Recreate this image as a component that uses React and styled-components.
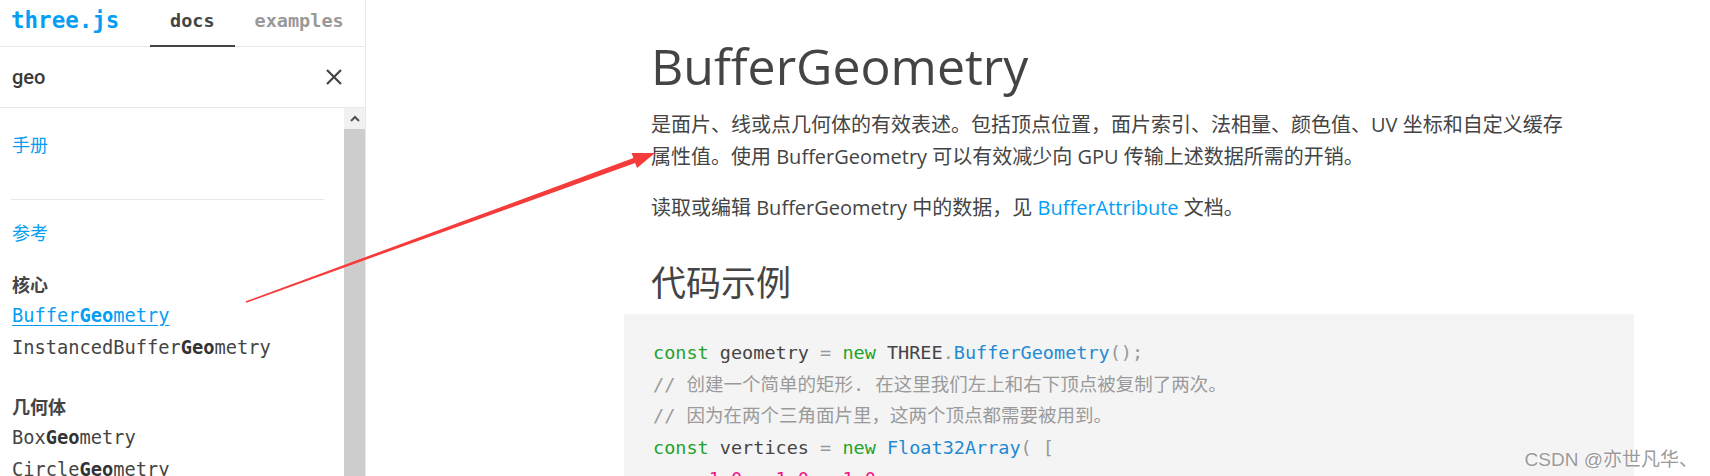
import React from "react";
import styled, { createGlobalStyle } from "styled-components";

const Colors = {
  text: "#444",
  link: "#049EF4",
  line: "#e8e8e8",
  muted: "#999",
};

const mono = `"DejaVu Sans Mono", "Liberation Mono", "Noto Sans CJK SC", monospace`;
const sans = `"Open Sans", "Noto Sans CJK SC", sans-serif`;

const GlobalStyle = createGlobalStyle`
  html, body {
    margin: 0;
    padding: 0;
    background: #fff;
    overflow: hidden;
  }
  #root {
    height: 476px;
  }
`;

const Page = styled.div`
  position: relative;
  display: flex;
  height: 476px;
  overflow: hidden;
  color: ${Colors.text};
`;

const Sidebar = styled.nav`
  flex: 0 0 366px;
  box-sizing: border-box;
  border-right: 1px solid ${Colors.line};
  display: flex;
  flex-direction: column;
`;

const Header = styled.div`
  display: flex;
  height: 46px;
  border-bottom: 1px solid ${Colors.line};
`;

const Logo = styled.div`
  flex: 0 0 150px;
  box-sizing: border-box;
  padding: 0 0 6px 11px;
  display: flex;
  align-items: center;
  font-family: ${mono};
  font-weight: bold;
  font-size: 22.5px;
  color: ${Colors.link};
`;

const Tab = styled.div`
  display: flex;
  align-items: center;
  padding: 0 20px 5px 20px;
  font-family: ${mono};
  font-weight: bold;
  font-size: 18.5px;
  color: ${props => (props.active ? Colors.text : Colors.muted)};
  border-bottom: 2px solid ${props => (props.active ? Colors.text : "transparent")};
  margin-bottom: -1px;
`;

const SearchRow = styled.div`
  height: 60px;
  border-bottom: 1px solid ${Colors.line};
  display: flex;
  align-items: center;
  justify-content: space-between;
  padding: 0 22px 0 12px;
  font-family: Roboto, sans-serif;
  font-weight: 500;
  font-size: 20px;
  color: #3a3a3a;
`;

const Panel = styled.div`
  flex: 1;
  display: flex;
  overflow: hidden;
`;

const NavList = styled.div`
  flex: 1;
  padding-top: 20px;
`;

const NavLink = styled.div`
  padding-left: 12px;
  line-height: 32px;
  font-family: "Noto Sans CJK SC", sans-serif;
  font-size: 18px;
  color: ${Colors.link};
  margin-bottom: ${props => props.gap || 0}px;
`;

const Divider = styled.hr`
  border: none;
  border-top: 1px solid ${Colors.line};
  margin: 0 20px 16px 11px;
`;

const Section = styled.div`
  margin-bottom: ${props => props.gap || 0}px;
`;

const SectionTitle = styled.div`
  padding-left: 12px;
  line-height: 32px;
  font-family: "Noto Sans CJK SC", sans-serif;
  font-weight: bold;
  font-size: 18px;
  color: ${Colors.text};
`;

const Entry = styled.div`
  padding-left: 12px;
  line-height: 32px;
  font-family: ${mono};
  font-size: 18.7px;
  white-space: nowrap;
  color: ${props => (props.selected ? Colors.link : Colors.text)};
  text-decoration: ${props => (props.selected ? "underline" : "none")};
  text-underline-offset: 3px;
  b {
    color: ${props => (props.selected ? Colors.link : "#333")};
  }
`;

const Scrollbar = styled.div`
  flex: 0 0 21px;
  display: flex;
  flex-direction: column;
  background: #f1f1f1;
`;

const ScrollButton = styled.div`
  height: 21px;
  display: flex;
  align-items: center;
  justify-content: center;
`;

const ScrollThumb = styled.div`
  flex: 1;
  background: #cdcdcd;
`;

const Main = styled.main`
  flex: 1;
  padding-left: 285px;
  font-family: ${sans};
`;

const Title = styled.h1`
  margin: 36px 0 0;
  font-family: ${sans};
  font-weight: normal;
  font-size: 50px;
  line-height: 60px;
  color: ${Colors.text};
`;

const Paragraph = styled.p`
  margin: ${props => props.top || 0}px 0 0;
  width: 925px;
  font-size: 20px;
  line-height: 32px;
  color: ${Colors.text};
`;

const Link = styled.span`
  color: ${Colors.link};
`;

const Heading = styled.h2`
  margin: 37px 0 0;
  font-family: ${sans};
  font-weight: normal;
  font-size: 35px;
  line-height: 44px;
  color: ${Colors.text};
`;

const CodeBlock = styled.pre`
  margin: 9px 0 0 -27px;
  width: 1010px;
  box-sizing: border-box;
  padding: 23px 30px 23px 29px;
  background: #f4f4f4;
  font-family: ${mono};
  font-size: 18.5px;
  line-height: 31.5px;
  color: ${Colors.text};
  white-space: pre;
`;

const Tok = styled.span`
  color: ${props => props.c};
`;

const Overlay = styled.svg`
  position: absolute;
  left: 0;
  top: 0;
  pointer-events: none;
`;

const Watermark = styled.div`
  position: absolute;
  right: 12px;
  bottom: 4px;
  font-family: "Liberation Sans", "Noto Sans CJK SC", sans-serif;
  font-size: 19px;
  line-height: 24px;
  color: #9a9a9a;
  text-shadow: 0 0 2px #fff, 0 0 2px #fff;
`;

const kwd = "#22a32b";
const typ = "#1f8ad2";
const pun = "#999";
const com = "#9a9a9a";
const lit = "#ee1188";

const CloseIcon = () => (
  <svg width="18" height="16" viewBox="0 0 18 16">
    <path d="M2 1 L16 15 M16 1 L2 15" stroke="#444" strokeWidth="2.2" fill="none" />
  </svg>
);

const UpIcon = () => (
  <svg width="10" height="7" viewBox="0 0 10 7">
    <path d="M1 6 L5 2 L9 6" stroke="#505050" strokeWidth="2" fill="none" />
  </svg>
);

const Arrow = () => (
  <Overlay width="1710" height="476" viewBox="0 0 1710 476">
    <polygon
      fill="#f63b3b"
      points="246.3,302.7 635.2,162.9 637.0,168.0 655,153 631.6,153.0 633.4,158.1 245.7,301.3"
    />
  </Overlay>
);

const App = () => {
  return (
    <Page>
      <GlobalStyle />
      <Sidebar>
        <Header>
          <Logo>three.js</Logo>
          <Tab active>docs</Tab>
          <Tab>examples</Tab>
        </Header>
        <SearchRow>
          geo
          <CloseIcon />
        </SearchRow>
        <Panel>
          <NavList>
            <NavLink gap={39}>手册</NavLink>
            <Divider />
            <NavLink gap={20}>参考</NavLink>
            <Section gap={26}>
              <SectionTitle>核心</SectionTitle>
              <Entry selected>
                Buffer<b>Geo</b>metry
              </Entry>
              <Entry>
                InstancedBuffer<b>Geo</b>metry
              </Entry>
            </Section>
            <Section>
              <SectionTitle>几何体</SectionTitle>
              <Entry>
                Box<b>Geo</b>metry
              </Entry>
              <Entry>
                Circle<b>Geo</b>metry
              </Entry>
            </Section>
          </NavList>
          <Scrollbar>
            <ScrollButton>
              <UpIcon />
            </ScrollButton>
            <ScrollThumb />
          </Scrollbar>
        </Panel>
      </Sidebar>

      <Main>
        <Title>BufferGeometry</Title>
        <Paragraph top={13}>
          是面片、线或点几何体的有效表述。包括顶点位置，面片索引、法相量、颜色值、UV 坐标和自定义缓存属性值。使用 BufferGeometry 可以有效减少向 GPU 传输上述数据所需的开销。
        </Paragraph>
        <Paragraph top={19}>
          读取或编辑 BufferGeometry 中的数据，见 <Link>BufferAttribute</Link> 文档。
        </Paragraph>
        <Heading>代码示例</Heading>
        <CodeBlock>
          <Tok c={kwd}>const</Tok> geometry <Tok c={pun}>=</Tok> <Tok c={kwd}>new</Tok> THREE
          <Tok c={pun}>.</Tok>
          <Tok c={typ}>BufferGeometry</Tok>
          <Tok c={pun}>();</Tok>
          {"\n"}
          <Tok c={com}>// 创建一个简单的矩形. 在这里我们左上和右下顶点被复制了两次。</Tok>
          {"\n"}
          <Tok c={com}>// 因为在两个三角面片里，这两个顶点都需要被用到。</Tok>
          {"\n"}
          <Tok c={kwd}>const</Tok> vertices <Tok c={pun}>=</Tok> <Tok c={kwd}>new</Tok>{" "}
          <Tok c={typ}>Float32Array</Tok>
          <Tok c={pun}>( [</Tok>
          {"\n"}
          {"    "}
          <Tok c={lit}>-1.0</Tok>
          <Tok c={pun}>, </Tok>
          <Tok c={lit}>-1.0</Tok>
          <Tok c={pun}>,  </Tok>
          <Tok c={lit}>1.0</Tok>
          <Tok c={pun}>,</Tok>
        </CodeBlock>
      </Main>

      <Arrow />
      <Watermark>CSDN @亦世凡华、</Watermark>
    </Page>
  );
};

export default App;
